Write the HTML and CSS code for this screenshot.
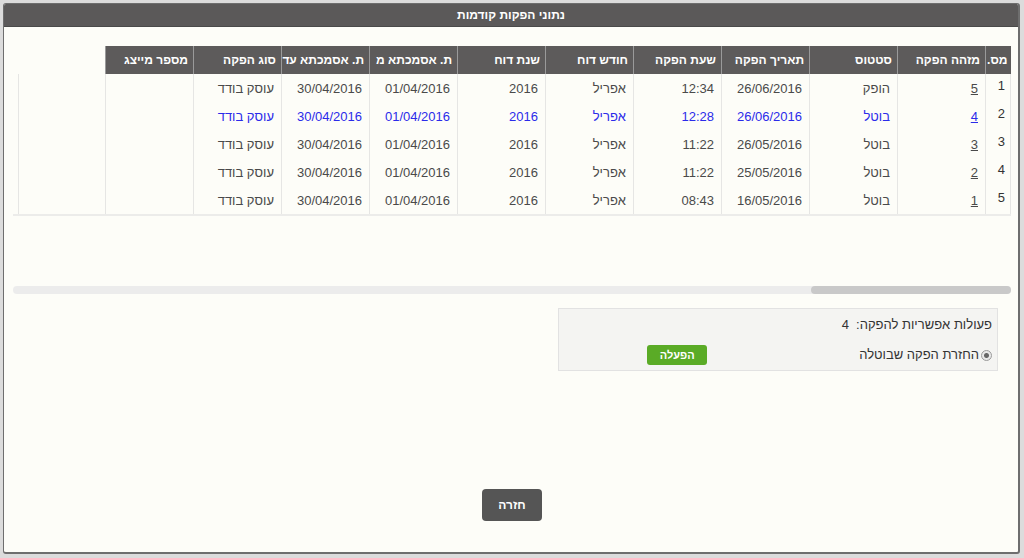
FILE: index.html
```html
<!DOCTYPE html>
<html lang="he" dir="rtl">
<head>
<meta charset="UTF-8">
<title>נתוני הפקות קודמות</title>
<link rel="stylesheet" href="styles.css">
</head>
<body>

<div class="dialog">
  <div class="title-bar">נתוני הפקות קודמות</div>

  <div class="dialog-body">
    <div class="table-wrap">
      <table class="grid">
        <thead>
          <tr>
            <th class="col-no">מס.</th>
            <th>מזהה הפקה</th>
            <th>סטטוס</th>
            <th>תאריך הפקה</th>
            <th>שעת הפקה</th>
            <th>חודש דוח</th>
            <th>שנת דוח</th>
            <th>ת. אסמכתא מ</th>
            <th>ת. אסמכתא עד</th>
            <th>סוג הפקה</th>
            <th>מספר מייצג</th>
            <th class="filler"></th>
          </tr>
        </thead>
        <tbody>
          <tr>
            <td class="col-no">1</td>
            <td><a href="#">5</a></td>
            <td>הופק</td>
            <td>26/06/2016</td>
            <td>12:34</td>
            <td>אפריל</td>
            <td>2016</td>
            <td>01/04/2016</td>
            <td>30/04/2016</td>
            <td>עוסק בודד</td>
            <td></td>
            <td class="filler"></td>
          </tr>
          <tr class="selected">
            <td class="col-no">2</td>
            <td><a href="#">4</a></td>
            <td>בוטל</td>
            <td>26/06/2016</td>
            <td>12:28</td>
            <td>אפריל</td>
            <td>2016</td>
            <td>01/04/2016</td>
            <td>30/04/2016</td>
            <td>עוסק בודד</td>
            <td></td>
            <td class="filler"></td>
          </tr>
          <tr>
            <td class="col-no">3</td>
            <td><a href="#">3</a></td>
            <td>בוטל</td>
            <td>26/05/2016</td>
            <td>11:22</td>
            <td>אפריל</td>
            <td>2016</td>
            <td>01/04/2016</td>
            <td>30/04/2016</td>
            <td>עוסק בודד</td>
            <td></td>
            <td class="filler"></td>
          </tr>
          <tr>
            <td class="col-no">4</td>
            <td><a href="#">2</a></td>
            <td>בוטל</td>
            <td>25/05/2016</td>
            <td>11:22</td>
            <td>אפריל</td>
            <td>2016</td>
            <td>01/04/2016</td>
            <td>30/04/2016</td>
            <td>עוסק בודד</td>
            <td></td>
            <td class="filler"></td>
          </tr>
          <tr>
            <td class="col-no">5</td>
            <td><a href="#">1</a></td>
            <td>בוטל</td>
            <td>16/05/2016</td>
            <td>08:43</td>
            <td>אפריל</td>
            <td>2016</td>
            <td>01/04/2016</td>
            <td>30/04/2016</td>
            <td>עוסק בודד</td>
            <td></td>
            <td class="filler"></td>
          </tr>
        </tbody>
      </table>
    </div>

    <div class="scrollbar"><div class="thumb"></div></div>

    <div class="actions">
      <div class="actions-title">פעולות אפשריות להפקה:&nbsp; 4</div>
      <div class="actions-row">
        <label class="radio"><span class="radio-dot"></span>החזרת הפקה שבוטלה</label>
        <button class="btn-run">הפעלה</button>
      </div>
    </div>

    <div class="footer">
      <button class="btn-back">חזרה</button>
    </div>
  </div>
</div>

</body>
</html>
```

FILE: styles.css
```css
body {
  margin: 0;
  background-color: #dcdcdc;
  font-family: "Liberation Sans", Arial, sans-serif;
  font-size: 13px;
  line-height: 16px;
  color: #4a4a4a;
}
.dialog {
  margin: 3px 4px 0 3px;
  height: 548px;
  border: 1px solid #6e6e6e;
  border-right-width: 2px;
  border-bottom-width: 2px;
  border-radius: 3px;
  background-color: #fdfdf8;
  overflow: hidden;
}
.title-bar {
  height: 22px;
  line-height: 22px;
  background-color: #5b5959;
  color: white;
  font-size: 12px;
  font-weight: bold;
  text-align: center;
  border-bottom: 1px solid #4a4a4a;
}
.dialog-body {
  padding: 19px 7px 0 9px;
}
.table-wrap {
  border-bottom: 2px solid #ececea;
}
.grid {
  border-collapse: collapse;
  width: calc(100% - 5px);
  margin-left: 5px;
  table-layout: fixed;
}
.grid tr {
  height: 28px;
}
.grid th {
  width: 88px;
  padding: 0 5px 0 0;
  background-color: #5d5b5b;
  color: white;
  font-size: 12px;
  font-weight: bold;
  line-height: 14px;
  text-align: right;
  border-left: 1px solid #9a9a9a;
  box-sizing: border-box;
}
.grid th.col-no {
  width: 25px;
  padding-right: 3px;
}
.grid th.filler {
  background: none;
  border: none;
  width: auto;
}
.grid td {
  padding: 1px 7px 0 0;
  line-height: 16px;
  text-align: right;
  border-left: 1px solid #e6e6e4;
  border-right: 1px solid #e6e6e4;
}
.grid td.col-no {
  vertical-align: top;
  padding: 4px 5px 0 0;
  color: #333;
}
.grid td.filler {
  border-right: none;
}
.grid a {
  color: #4a4a4a;
}
.grid tr.selected td,
.grid tr.selected a {
  color: #2b2bea;
}
.grid tr.selected td.col-no {
  color: #333;
}
.scrollbar {
  margin-top: 70px;
  height: 8px;
  border-radius: 4px;
  background-color: #ececec;
}
.thumb {
  width: 200px;
  height: 8px;
  border-radius: 4px;
  background-color: #c9c9c9;
}
.actions {
  width: 440px;
  margin: 14px 13px 0 0;
  padding: 8px 5px 5px 0;
  box-sizing: border-box;
  border: 1px solid #e2e2e2;
  background-color: #f4f4f2;
  color: #333;
}
.actions-title {
  line-height: 16px;
}
.actions-row {
  display: flex;
  align-items: center;
  gap: 152px;
  margin-top: 12px;
}
.radio {
  display: flex;
  align-items: center;
  gap: 2px;
}
.radio-dot {
  width: 9px;
  height: 9px;
  border: 1px solid #9a9a9a;
  border-radius: 50%;
  background: radial-gradient(circle, #666 0 2px, #e8e8e8 3px);
}
.btn-run {
  width: 60px;
  height: 20px;
  border: none;
  border-radius: 3px;
  background-color: #5aab26;
  color: white;
  font-family: inherit;
  font-size: 11px;
  font-weight: bold;
}
.footer {
  display: flex;
  justify-content: center;
  margin-top: 118px;
}
.btn-back {
  width: 60px;
  height: 32px;
  border: none;
  border-radius: 4px;
  background-color: #555555;
  color: white;
  font-family: inherit;
  font-size: 12px;
  font-weight: bold;
}
```
